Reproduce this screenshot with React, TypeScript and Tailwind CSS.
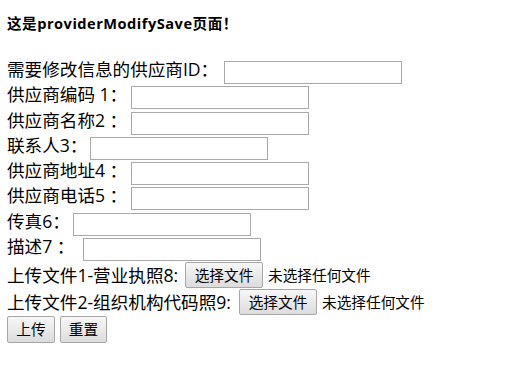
const fields = [
  { label: '需要修改信息的供应商ID：', w: 'w-[217px]' },
  { label: '供应商编码 1：', w: 'w-[124px]' },
  { label: '供应商名称2 ：', w: 'w-[124px]' },
  { label: '联系人3：', w: 'w-[83px]' },
  { label: '供应商地址4 ：', w: 'w-[124px]' },
  { label: '供应商电话5 ：', w: 'w-[124px]' },
  { label: '传真6：', w: 'w-[65.5px]' },
  { label: '描述7 ：', w: 'w-[75.5px]' },
];

const files = [
  { label: '上传文件1-营业执照8:', w: 'w-[178px]' },
  { label: '上传文件2-组织机构代码照9:', w: 'w-[232px]' },
];

const btn =
  'border border-[#a6a6a6] rounded-[2px] bg-linear-to-b from-[#f7f7f7] to-[#dcdcdc] text-[14.67px] leading-none text-black';

export default function App() {
  return (
    <div className="min-h-[367px] bg-white pt-[15px] pl-[7px] text-black font-['Open_Sans','Noto_Sans_CJK_SC',sans-serif]">
      <h5 className="h-[17px] text-[14.6px] font-bold leading-[17px] tracking-[0.5px]">这是providerModifySave页面！</h5>
      <form className="mt-[29px] text-[17.6px]">
        {fields.map((f) => (
          <div key={f.label} className="flex h-[25.3px] items-start">
            <span className={`${f.w} shrink-0 whitespace-nowrap leading-[17.6px]`}>{f.label}</span>
            <input type="text" className="h-[23px] w-[178px] border border-[#a9a9a9] bg-white px-[2px] text-[14.67px] outline-none" />
          </div>
        ))}
        <div className="mt-[-1.4px]">
          {files.map((f) => (
            <div key={f.label} className="flex h-[27px] items-center">
              <span className={`${f.w} shrink-0 whitespace-nowrap leading-[17.6px]`}>{f.label}</span>
              <button type="button" className={`${btn} h-[26px] w-[78px]`}>选择文件</button>
              <span className="ml-[5px] text-[14.67px] leading-none">未选择任何文件</span>
            </div>
          ))}
        </div>
        <div className="flex gap-[5px]">
          <button type="submit" className={`${btn} h-[27px] w-[48px]`}>上传</button>
          <button type="reset" className={`${btn} h-[27px] w-[47px]`}>重置</button>
        </div>
      </form>
    </div>
  );
}
